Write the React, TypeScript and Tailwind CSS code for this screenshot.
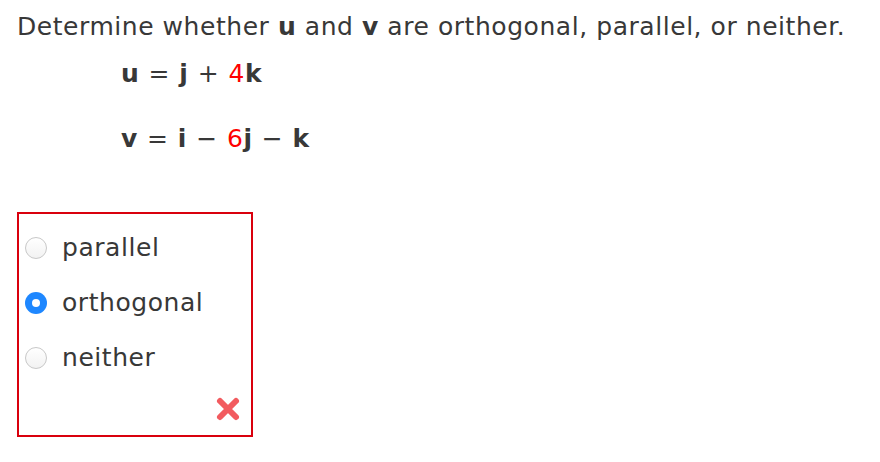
import React from "react";

const font = { fontFamily: '"DejaVu Sans", Verdana, sans-serif' };

function Radio({ checked }: { checked?: boolean }) {
  if (checked) {
    return (
      <span className="w-[22px] h-[22px] rounded-full bg-[#1e87ff] flex items-center justify-center shrink-0">
        <span className="w-[8px] h-[8px] rounded-full bg-white" />
      </span>
    );
  }
  return (
    <span className="w-[22px] h-[22px] rounded-full border border-[#c8c8c8] bg-gradient-to-b from-white to-[#f2f2f2] shrink-0" />
  );
}

function WrongMark() {
  return (
    <svg width="26" height="26" viewBox="0 0 26 26">
      <path d="M5 5 L21 21 M21 5 L5 21" stroke="#f25b5f" strokeWidth="6" strokeLinecap="round" />
    </svg>
  );
}

export default function App() {
  const options = [
    { label: "parallel", checked: false },
    { label: "orthogonal", checked: true },
    { label: "neither", checked: false },
  ];

  return (
    <div className="w-[880px] h-[462px] bg-white text-[#383838]" style={font}>
      <div className="pl-[17px] pt-[11px]">
        <p className="text-[25px] leading-[32px] tracking-[0.55px]">
          Determine whether <b>u</b> and <b>v</b> are orthogonal, parallel, or neither.
        </p>
        <div className="pl-[104px] mt-[15px] text-[25px] leading-[32px] font-bold tracking-[0.55px]">
          <p className="whitespace-pre">
            u <span className="font-normal">=</span> j <span className="font-normal">+</span>{" "}
            <span className="text-[#ff0000] font-normal">4</span>k
          </p>
          <p className="whitespace-pre mt-[33px]">
            v <span className="font-normal">=</span> i <span className="font-normal">−</span>{" "}
            <span className="text-[#ff0000] font-normal">6</span>j <span className="font-normal">−</span> k
          </p>
        </div>
        <div className="mt-[57px] w-[236px] h-[225px] border-2 border-[#d9000d] flex flex-col">
          <div className="flex flex-col gap-[23px] pt-[18px] pl-[6px]">
            {options.map((o) => (
              <div key={o.label} className="flex items-center gap-[15px] h-[32px]">
                <Radio checked={o.checked} />
                <span className="text-[25px] leading-[32px] tracking-[0.55px]">{o.label}</span>
              </div>
            ))}
          </div>
          <div className="flex justify-end pr-[10px] mt-auto pb-[13px]">
            <WrongMark />
          </div>
        </div>
      </div>
    </div>
  );
}
